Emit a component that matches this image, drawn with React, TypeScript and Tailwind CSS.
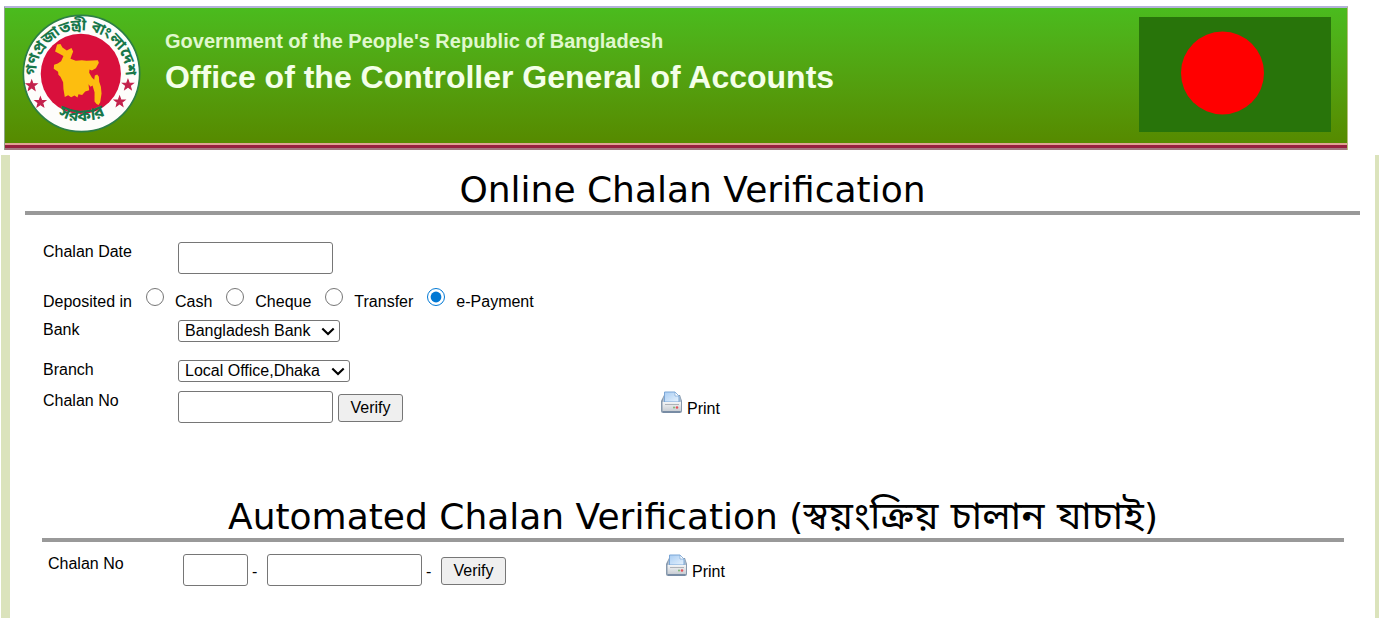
import type { ReactNode } from "react";

function Emblem() {
  return (
    <svg viewBox="69 40 356 356" className="size-[119px] shrink-0" role="img" aria-label="Government seal of Bangladesh">
      <defs>
        <path id="ring-top" d="M115 255 A134 134 0 1 1 375 255" />
        <path id="ring-bottom" d="M110 270 A149 149 0 0 0 384 270" />
      </defs>
      <circle cx="247" cy="218" r="174" fill="#fdfdfb" stroke="#2c7f45" strokeWidth="5" />
      <circle cx="245" cy="219" r="120" fill="#d9103c" />
      <path
        fill="#fdbe0f"
        d="M174 131 L184 130 L190 140 L203 149 L217 142 L222 152 L217 165 L214 174 L230 180 L248 178 L262 180 L296 178 L299 186 L290 202 L278 209 L271 206 L270 216 L278 230 L285 237 L287 224 L294 221 L299 228 L300 243 L305 258 L307 278 L303 304 L298 312 L292 309 L286 302 L286 274 L280 254 L274 258 L268 250 L270 268 L258 272 L249 282 L238 280 L235 290 L226 284 L216 289 L207 283 L197 288 L193 264 L192 244 L184 228 L178 222 L177 213 L164 204 L165 192 L176 188 L186 181 L193 166 L181 159 L168 152 Z"
      />
      <g fill="#c3224c" stroke="#c3224c" strokeWidth="3">
        <path d="M98 238 L102 249 L114 249 L105 256 L108 268 L98 261 L88 268 L91 256 L82 249 L94 249 Z" />
        <path d="M124 288 L128 299 L140 299 L131 306 L134 318 L124 311 L114 318 L117 306 L108 299 L120 299 Z" />
        <path d="M386 236 L390 247 L402 247 L393 254 L396 266 L386 259 L376 266 L379 254 L370 247 L382 247 Z" />
        <path d="M361 286 L365 297 L377 297 L368 304 L371 316 L361 309 L351 316 L354 304 L345 297 L357 297 Z" />
      </g>
      <g fill="#17774a" fontWeight="700" fontFamily="'Noto Sans Bengali', 'Noto Sans', sans-serif" textAnchor="middle">
        <text fontSize="46">
          <textPath href="#ring-top" startOffset="50%">গণপ্রজাতন্ত্রী বাংলাদেশ</textPath>
        </text>
        <text fontSize="50">
          <textPath href="#ring-bottom" startOffset="50%">সরকার</textPath>
        </text>
      </g>
    </svg>
  );
}

function PrinterIcon() {
  return (
    <svg viewBox="0 0 22 23" className="h-[23px] w-[22px] shrink-0" aria-hidden="true">
      <defs>
        <linearGradient id="printer-body" x1="0" y1="0" x2="0" y2="1">
          <stop offset="0" stopColor="#f4f5f6" />
          <stop offset="1" stopColor="#c9ced4" />
        </linearGradient>
        <linearGradient id="printer-paper" x1="0" y1="0" x2="1" y2="1">
          <stop offset="0" stopColor="#a9cdf3" />
          <stop offset="1" stopColor="#e6f2fd" />
        </linearGradient>
      </defs>
      <path d="M3 4 H19 L21 10 V20 Q21 22 19 22 H2 Q0 22 0 20 V10 Z" fill="#8799ad" />
      <path d="M3 5 H19 L20 11 H1.5 Z" fill="#b4c4d5" />
      <path d="M3.5 11 V1 H14 L18 5 V11 Z" fill="url(#printer-paper)" stroke="#7ba6d6" strokeWidth="1" />
      <path d="M14 1 V5 H18 Z" fill="#fff" stroke="#7ba6d6" strokeWidth=".7" />
      <path d="M1.5 11 H20 V20 H1.5 Z" fill="url(#printer-body)" />
      <path d="M4 13.5 H18" stroke="#aeb2b8" strokeWidth="1" />
      <circle cx="13" cy="16.5" r="1" fill="#79b870" />
      <circle cx="16" cy="16.5" r="1.3" fill="#e3535c" />
      <path d="M2 21 H19" stroke="#697f9b" strokeWidth="1" />
    </svg>
  );
}

const fieldClass = "h-8 rounded-[3px] border border-[#767676] bg-white px-1";

function Heading({ children }: { children: ReactNode }) {
  return (
    <h1 className="border-b-4 border-[#999999] pt-0.5 text-center font-['DejaVu_Sans','Noto_Sans_Bengali',sans-serif] text-4xl leading-[42px]">
      {children}
    </h1>
  );
}

function SelectRow({ id, label, option, width }: { id: string; label: string; option: string; width: string }) {
  return (
    <div className="flex items-start">
      <label htmlFor={id} className="w-[135px]">{label}</label>
      <div className={`grid items-center ${width}`}>
        <select
          id={id}
          className="col-start-1 row-start-1 h-[22px] w-full appearance-none rounded-[3px] border border-[#767676] bg-white pl-1.5 leading-5"
        >
          <option>{option}</option>
        </select>
        <svg
          viewBox="0 0 14 9"
          className="pointer-events-none col-start-1 row-start-1 mr-[5px] h-[9px] w-3.5 justify-self-end"
          aria-hidden="true"
        >
          <path d="M1.3 1.4 L7 7 L12.7 1.4" fill="none" stroke="#000" strokeWidth="2.1" />
        </svg>
      </div>
    </div>
  );
}

function VerifyButton() {
  return (
    <button type="submit" className="mb-px h-7 w-[65px] rounded-[3px] border border-[#767676] bg-[#efefef]">
      Verify
    </button>
  );
}

function PrintLink() {
  return (
    <a href="#print" className="flex items-start gap-1">
      <PrinterIcon />
      <span className="pt-2">Print</span>
    </a>
  );
}

const methods = ["Cash", "Cheque", "Transfer", "e-Payment"];

export default function App() {
  return (
    <div className="flex min-h-screen flex-col bg-white pt-1.5 font-['Liberation_Sans',Arial,sans-serif] text-base leading-5 text-black">
      <header className="mr-[31px] ml-1 border-t-2 border-r border-l border-t-[#b3b2d8] border-r-[#b7bf7c] border-l-[#8fa58a]">
        <div className="flex items-start bg-linear-to-b from-[#4abb1e] to-[#568a00] pr-4 pb-[3px] pl-[17px] text-[#f4ffe9]">
          <div className="pt-1.5">
            <Emblem />
          </div>
          <div className="grow pt-[21px] pl-6 font-bold">
            <p className="text-xl leading-6 text-[#e0f8ce]">Government of the People's Republic of Bangladesh</p>
            <p className="pt-1 text-[32px] leading-10">Office of the Controller General of Accounts</p>
          </div>
          <svg viewBox="0 0 192 115" className="mt-[9px] mb-2 h-[115px] w-48 shrink-0" role="img" aria-label="Flag of Bangladesh">
            <rect width="192" height="115" fill="#28740a" />
            <circle cx="83.5" cy="56" r="41.5" fill="#ff0000" />
          </svg>
        </div>
        <div className="h-0.5 bg-[#e0a294]" />
        <div className="h-[3px] bg-[#97203f]" />
        <div className="h-0.5 bg-[#a3777f]" />
      </header>

      <main className="mt-[5px] ml-px grow border-r-4 border-l-9 border-[#dbe3bc] px-[15px] pt-3">
        <form onSubmit={(e) => e.preventDefault()}>
          <Heading>Online Chalan Verification</Heading>
          <div className="pt-[27px] pl-[18px]">
            <div className="flex items-start">
              <label htmlFor="chalan-date" className="w-[135px]">Chalan Date</label>
              <input id="chalan-date" type="text" className={`${fieldClass} w-[155px]`} />
            </div>
            <div role="radiogroup" aria-labelledby="deposited-in" className="flex items-end gap-3.5 pt-3.5">
              <span id="deposited-in">Deposited in</span>
              {methods.map((method) => (
                <label key={method} className="flex items-start gap-[11px]">
                  <input
                    type="radio"
                    name="deposited-in"
                    defaultChecked={method === "e-Payment"}
                    className="size-[18px] accent-[#0078d4]"
                  />
                  <span className="pt-1">{method}</span>
                </label>
              ))}
            </div>
            <div className="grid gap-[18px] pt-2">
              <SelectRow id="bank" label="Bank" option="Bangladesh Bank" width="w-[162px]" />
              <SelectRow id="branch" label="Branch" option="Local Office,Dhaka" width="w-[172px]" />
            </div>
            <div className="flex items-start pt-[9px]">
              <label htmlFor="chalan-no" className="w-[135px]">Chalan No</label>
              <div className="flex w-[483px] items-end gap-[5px]">
                <input id="chalan-no" type="text" className={`${fieldClass} w-[155px]`} />
                <VerifyButton />
              </div>
              <PrintLink />
            </div>
          </div>
        </form>

        <form className="pt-[70px] pr-4 pl-[17px]" onSubmit={(e) => e.preventDefault()}>
          <Heading>
            Automated Chalan Verification (<span className="text-[39px]">স্বয়ংক্রিয় চালান যাচাই</span>)
          </Heading>
          <div className="flex items-start pt-3 pl-1.5">
            <label htmlFor="auto-prefix" className="w-[135px]">Chalan No</label>
            <div className="flex w-[483px] items-end">
              <input id="auto-prefix" type="text" className={`${fieldClass} w-[65px]`} />
              <span className="w-[19px] pb-1 pl-1">-</span>
              <input type="text" aria-label="Chalan number" className={`${fieldClass} w-[155px]`} />
              <span className="w-[19px] pb-1 pl-1">-</span>
              <VerifyButton />
            </div>
            <PrintLink />
          </div>
        </form>
      </main>
    </div>
  );
}
